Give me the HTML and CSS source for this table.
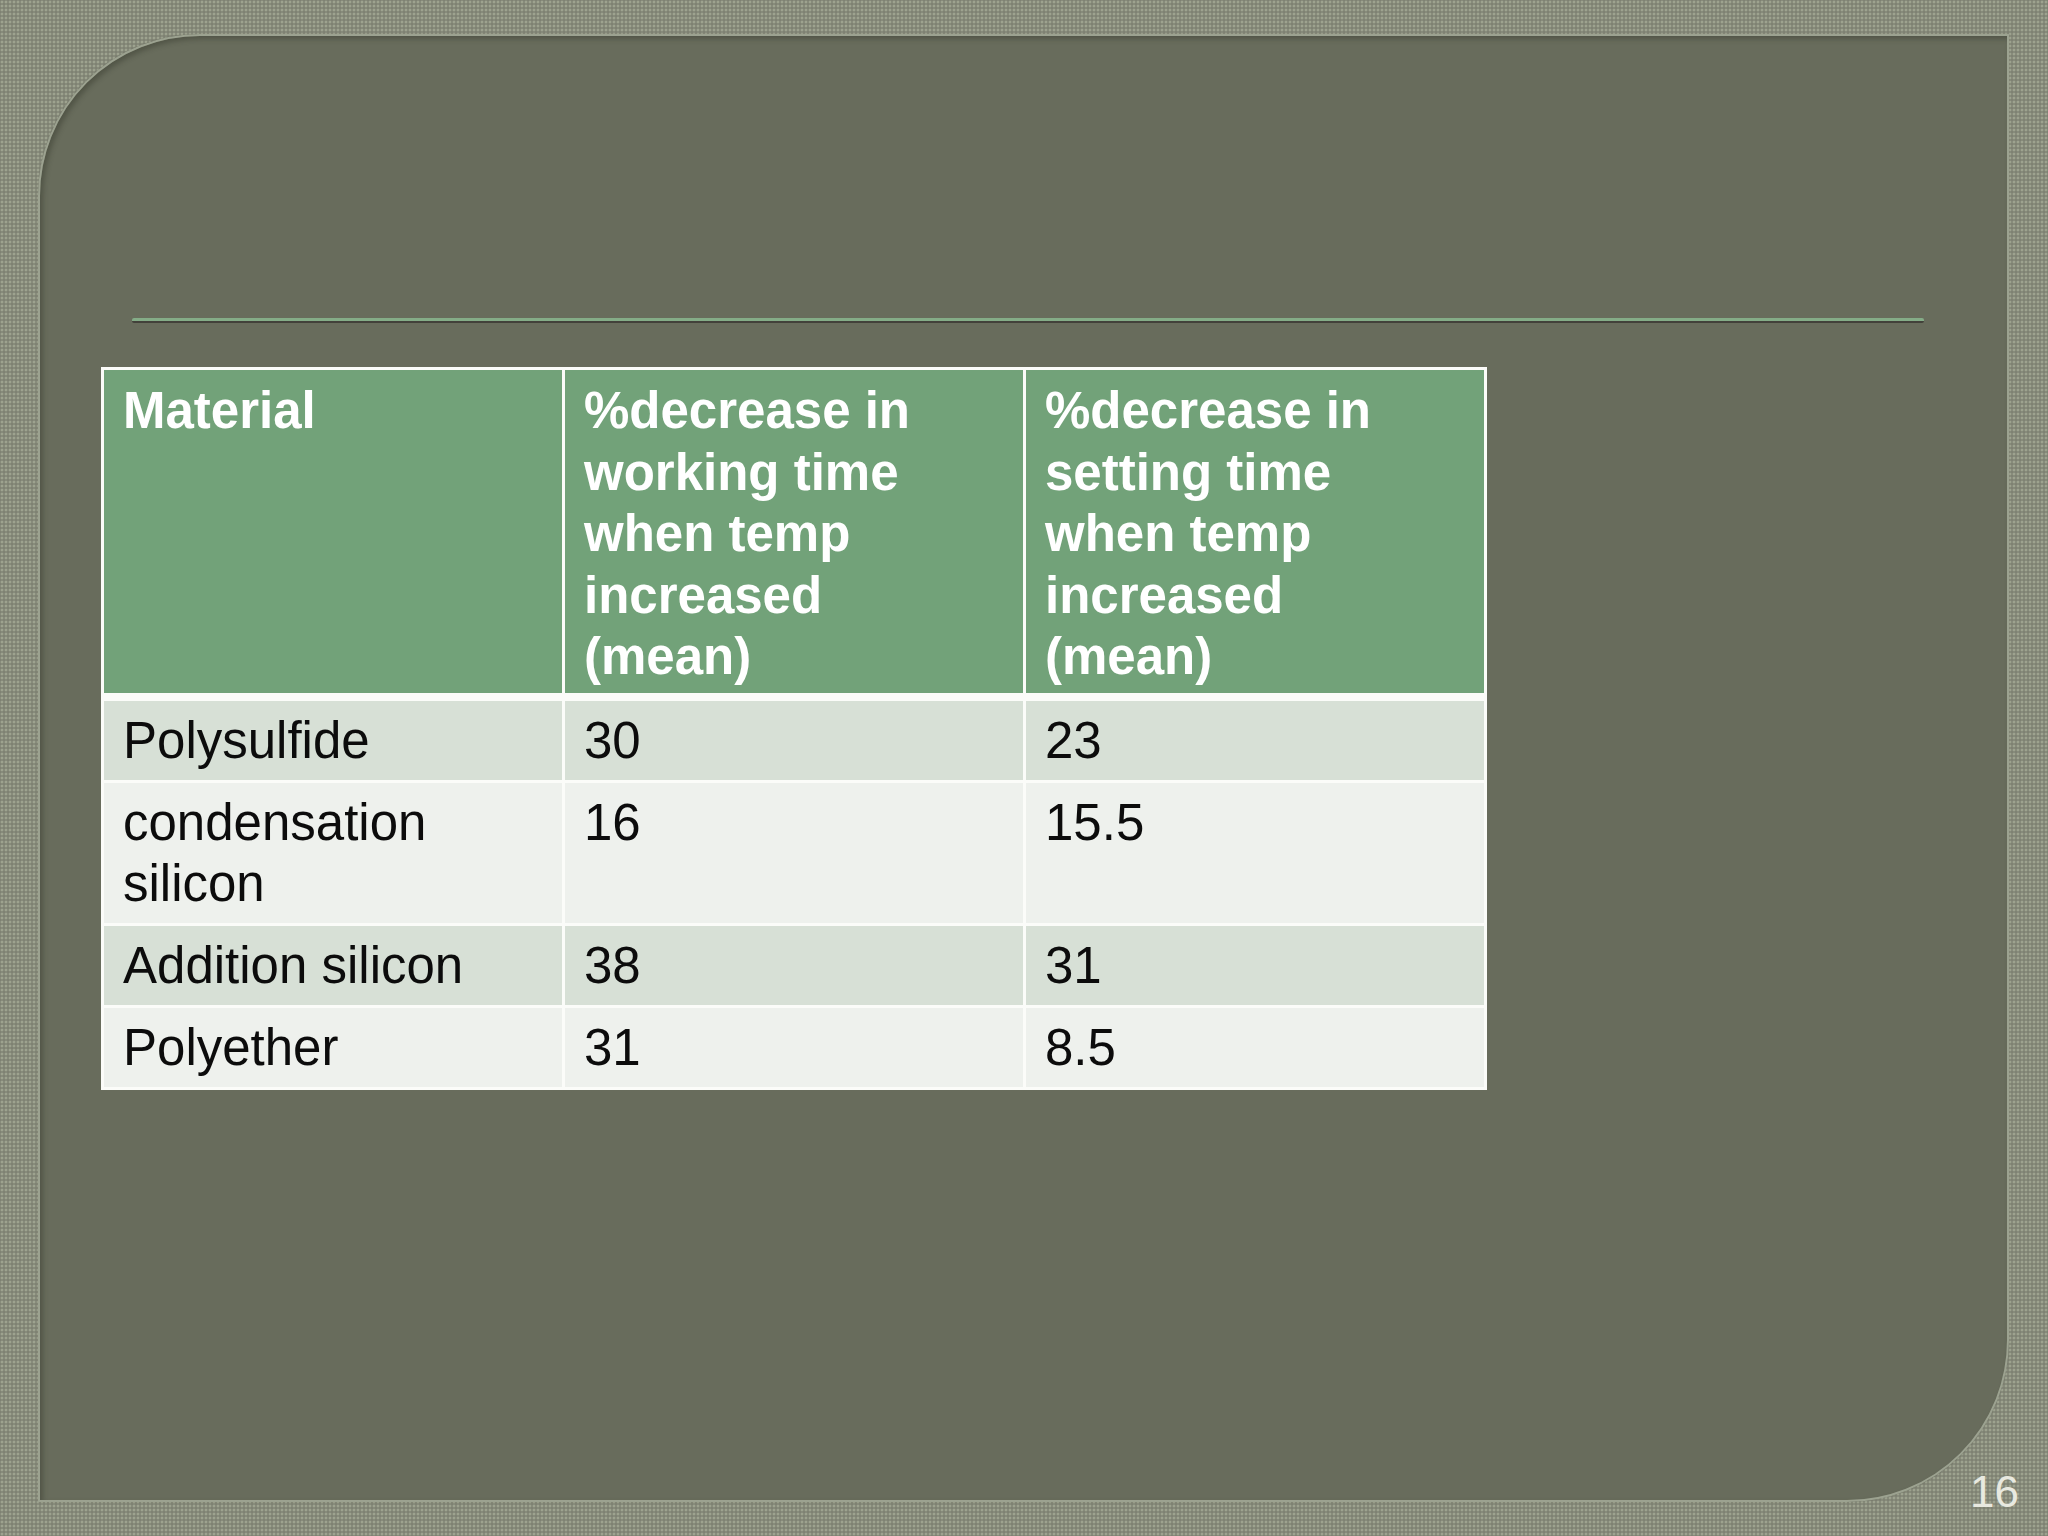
FILE: index.html
```html
<!DOCTYPE html>
<html lang="en">
<head>
<meta charset="utf-8">
<title>Slide 16</title>
<link rel="stylesheet" href="styles.css">
</head>
<body>
<div class="frame">
  <div class="panel">
    <div class="title-rule"></div>
    <table class="data">
      <thead>
        <tr>
          <th>Material</th>
          <th>%decrease in working time when temp increased (mean)</th>
          <th>%decrease in setting time when temp increased (mean)</th>
        </tr>
      </thead>
      <tbody>
        <tr class="odd">
          <td>Polysulfide</td>
          <td>30</td>
          <td>23</td>
        </tr>
        <tr class="even">
          <td>condensation silicon</td>
          <td>16</td>
          <td>15.5</td>
        </tr>
        <tr class="odd">
          <td>Addition silicon</td>
          <td>38</td>
          <td>31</td>
        </tr>
        <tr class="even">
          <td>Polyether</td>
          <td>31</td>
          <td>8.5</td>
        </tr>
      </tbody>
    </table>
  </div>
  <div class="page-num">16</div>
</div>
</body>
</html>
```

FILE: styles.css
```css
html, body {
  margin: 0;
  padding: 0;
}

body {
  width: 2048px;
  height: 1536px;
  overflow: hidden;
  font-family: "Liberation Sans", Arial, sans-serif;
  background-color: #878b7b;
  background-image:
    radial-gradient(circle, rgba(176, 181, 160, 0.55) 0.9px, transparent 1.4px),
    radial-gradient(circle, rgba(110, 114, 98, 0.35) 0.9px, transparent 1.4px);
  background-size: 4px 4px, 4px 4px;
  background-position: 0 0, 2px 2px;
}

.frame {
  position: relative;
  box-sizing: border-box;
  width: 2048px;
  height: 1536px;
  padding: 34px 39px 34px 38px;
}

.panel {
  box-sizing: border-box;
  height: 100%;
  background: #686c5c;
  border: 2px solid #9ca290;
  border-radius: 162px 0 162px 0;
  box-shadow: inset 3px 3px 5px rgba(40, 42, 32, 0.35), 0 0 1px rgba(60, 62, 50, 0.5);
  overflow: hidden;
}

.title-rule {
  margin: 282px 0 0 92px;
  width: 1792px;
  height: 0;
  border-top: 3px solid #84ac87;
  border-bottom: 2px solid #42413a;
  border-radius: 2px;
}

.data {
  margin: 44px 0 0 61px;
  width: 1386px;
  border-collapse: separate;
  border-spacing: 3px;
  background: #fbfcf9;
  table-layout: fixed;
}

.data th,
.data td {
  text-align: left;
  vertical-align: top;
  padding: 9px 17px 9px 19px;
}

.data th {
  background: #72a279;
  color: #ffffff;
  font-weight: bold;
  font-size: 51px;
  line-height: 61.5px;
  padding-top: 10px;
  padding-right: 60px;
  padding-bottom: 5px;
  border-bottom: 5px solid #fbfcf9;
}

.data td {
  color: #0c0c0c;
  font-size: 51px;
  line-height: 61px;
}

.data .odd td {
  background: #d7e0d6;
}

.data .even td {
  background: #eef1ed;
}

.page-num {
  position: absolute;
  right: 29px;
  top: 1470px;
  font-size: 44px;
  line-height: 44px;
  color: #e8e9e0;
}
```
